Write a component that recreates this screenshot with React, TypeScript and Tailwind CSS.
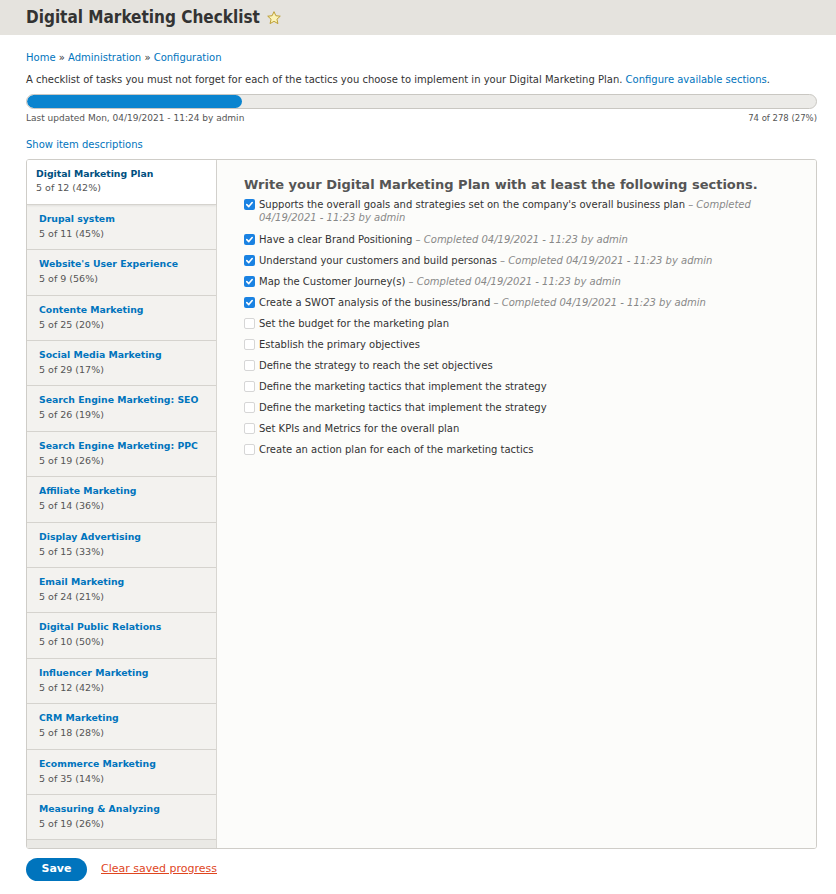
const sections = [
  { title: "Digital Marketing Plan", done: 5, total: 12, pct: 42 },
  { title: "Drupal system", done: 5, total: 11, pct: 45 },
  { title: "Website's User Experience", done: 5, total: 9, pct: 56 },
  { title: "Contente Marketing", done: 5, total: 25, pct: 20 },
  { title: "Social Media Marketing", done: 5, total: 29, pct: 17 },
  { title: "Search Engine Marketing: SEO", done: 5, total: 26, pct: 19 },
  { title: "Search Engine Marketing: PPC", done: 5, total: 19, pct: 26 },
  { title: "Affiliate Marketing", done: 5, total: 14, pct: 36 },
  { title: "Display Advertising", done: 5, total: 15, pct: 33 },
  { title: "Email Marketing", done: 5, total: 24, pct: 21 },
  { title: "Digital Public Relations", done: 5, total: 10, pct: 50 },
  { title: "Influencer Marketing", done: 5, total: 12, pct: 42 },
  { title: "CRM Marketing", done: 5, total: 18, pct: 28 },
  { title: "Ecommerce Marketing", done: 5, total: 35, pct: 14 },
  { title: "Measuring & Analyzing", done: 5, total: 19, pct: 26 },
];

const items: { label: string; checked: boolean }[] = [
  { label: "Supports the overall goals and strategies set on the company's overall business plan", checked: true },
  { label: "Have a clear Brand Positioning", checked: true },
  { label: "Understand your customers and build personas", checked: true },
  { label: "Map the Customer Journey(s)", checked: true },
  { label: "Create a SWOT analysis of the business/brand", checked: true },
  { label: "Set the budget for the marketing plan", checked: false },
  { label: "Establish the primary objectives", checked: false },
  { label: "Define the strategy to reach the set objectives", checked: false },
  { label: "Define the marketing tactics that implement the strategy", checked: false },
  { label: "Define the marketing tactics that implement the strategy", checked: false },
  { label: "Set KPIs and Metrics for the overall plan", checked: false },
  { label: "Create an action plan for each of the marketing tactics", checked: false },
];

function Checkbox({ checked }: { checked: boolean }) {
  if (checked) {
    return (
      <span className="mt-[1px] flex h-[11px] w-[11px] shrink-0 items-center justify-center rounded-[2px] bg-[#1a82e2]">
        <svg viewBox="0 0 10 10" className="h-[9px] w-[9px]">
          <path d="M2 5.2 L4.2 7.3 L8 2.8" fill="none" stroke="white" strokeWidth="1.8" strokeLinecap="round" strokeLinejoin="round" />
        </svg>
      </span>
    );
  }
  return <span className="mt-[1px] h-[11px] w-[11px] shrink-0 rounded-[2px] border border-[#d6d6d6] bg-white" />;
}

export default function App() {
  return (
    <div className="min-h-screen bg-white font-['DejaVu_Sans',sans-serif] text-[#333]">
      <div className="flex h-[35px] items-center bg-[#e5e3de] px-[26px]">
        <h1 className="font-['DejaVu_Sans_Condensed','DejaVu_Sans',sans-serif] text-[17px] font-bold text-[#333]">
          Digital Marketing Checklist
        </h1>
        <svg viewBox="0 0 24 24" className="ml-[6px] h-[16px] w-[16px]">
          <path
            d="M12 2.5 L14.8 8.6 L21.4 9.3 L16.4 13.8 L17.9 20.4 L12 17 L6.1 20.4 L7.6 13.8 L2.6 9.3 L9.2 8.6 Z"
            fill="#fbf3b8"
            stroke="#b99a2a"
            strokeWidth="1.4"
            strokeLinejoin="round"
          />
        </svg>
      </div>

      <div className="pl-[26px] pr-[19px]">
        <div className="mt-[15px] text-[10px] text-[#0074bd]">
          Home <span className="text-[#333]">»</span> Administration <span className="text-[#333]">»</span> Configuration
        </div>
        <p className="mt-[7px] text-[10px]">
          A checklist of tasks you must not forget for each of the tactics you choose to implement in your Digital Marketing Plan.{" "}
          <span className="text-[#0074bd]">Configure available sections</span>.
        </p>

        <div className="mt-[7px] h-[15px] overflow-hidden rounded-full border border-[#c9c7c2] bg-[#ecebe8]">
          <div className="h-full w-[27.3%] rounded-full bg-[#0a84cf]" />
        </div>
        <div className="mt-[3px] flex justify-between text-[9px] text-[#555]">
          <span>Last updated Mon, 04/19/2021 - 11:24 by admin</span>
          <span className="text-[8.5px]">74 of 278 (27%)</span>
        </div>

        <div className="mt-[11px] text-[10px] text-[#0074bd]">Show item descriptions</div>

        <div className="mt-[7px] flex h-[690px] overflow-hidden rounded-[3px] border border-[#cfcdc8]">
          <ul className="flex w-[190px] shrink-0 flex-col border-r border-[#d8d6d1] bg-[#f3f2ef]">
            {sections.map((s, i) => (
              <li
                key={s.title}
                className={
                  i === 0
                    ? "h-[45.4px] shrink-0 border-b border-[#d5d3ce] bg-white pl-[9px] pt-[7px] shadow-[0_1px_2px_rgba(0,0,0,0.08)]"
                    : "h-[45.4px] shrink-0 border-b border-[#d5d3ce] pl-[12px] pt-[7px]"
                }
              >
                <div className={i === 0 ? "text-[9.3px] font-bold text-[#004f80]" : "text-[9.3px] font-bold text-[#0074bd]"}>
                  {s.title}
                </div>
                <div className="mt-[1px] text-[9.5px] text-[#555]">
                  {s.done} of {s.total} ({s.pct}%)
                </div>
              </li>
            ))}
            <li className="flex-1 bg-[#eae9e5]" />
          </ul>

          <div className="flex-1 bg-[#fcfcfa] pl-[27px] pr-[20px] pt-[15px]">
            <h2 className="text-[13px] font-bold text-[#555]">Write your Digital Marketing Plan with at least the following sections.</h2>
            <div className="mt-[4px] flex flex-col gap-[8px]">
              {items.map((it, i) => (
                <div key={i} className={i === 1 ? "mt-[1px] flex gap-[4px] text-[10px] leading-[13px]" : "flex gap-[4px] text-[10px] leading-[13px]"}>
                  <Checkbox checked={it.checked} />
                  <span>
                    {it.label}
                    {it.checked && (
                      <span className="italic text-[#888]"> – Completed 04/19/2021 - 11:23 by admin</span>
                    )}
                  </span>
                </div>
              ))}
            </div>
          </div>
        </div>

        <div className="mt-[9px] flex items-center gap-[14px]">
          <button className="h-[23px] w-[61px] rounded-full bg-[#0074bd] text-[11px] font-bold text-white">Save</button>
          <a className="text-[11px] text-[#e0461e] underline">Clear saved progress</a>
        </div>
      </div>
    </div>
  );
}
